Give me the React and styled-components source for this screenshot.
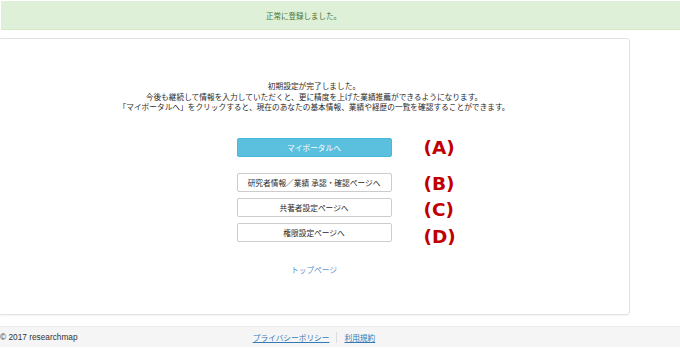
import React from "react";
import styled, { createGlobalStyle } from "styled-components";

const Global = createGlobalStyle`
  html, body {
    margin: 0;
    padding: 0;
    background: #fff;
  }
  body {
    font-family: "Liberation Sans", "Noto Sans CJK JP", sans-serif;
    color: #333;
  }
`;

const Page = styled.div`
  width: 680px;
  height: 348px;
  overflow: hidden;
  padding-top: 1px;
  box-sizing: border-box;
`;

const Alert = styled.div`
  height: 28px;
  margin-left: 1px;
  background: #dff0d8;
  border-bottom: 1px solid #d6e9c6;
  color: #3c763d;
  font-size: 7.5px;
  display: flex;
  align-items: center;
  justify-content: center;
  padding-right: 74px;
`;

const Container = styled.div`
  width: 632px;
  margin-left: -2px;
`;

const Card = styled.div`
  margin-top: 8px;
  height: 277px;
  box-sizing: border-box;
  border: 1px solid #e3e3e3;
  border-radius: 3px;
  box-shadow: 0 1px 1px rgba(0, 0, 0, 0.04);
  padding-top: 43px;
  display: flex;
  flex-direction: column;
  align-items: stretch;
`;

const Message = styled.p`
  margin: 0;
  text-align: center;
  font-size: 7.7px;
  line-height: 10.5px;
  color: #2a2a2a;
`;

const Actions = styled.div`
  margin-top: 24px;
  display: flex;
  flex-direction: column;
  gap: 6px;
`;

const Row = styled.div`
  display: grid;
  grid-template-columns: 1fr 155px 1fr;
  align-items: center;
  margin-bottom: ${(p) => (p.$spaced ? "10px" : "0")};
`;

const Button = styled.button`
  grid-column: 2;
  height: 19px;
  box-sizing: border-box;
  padding: 0;
  font-family: inherit;
  font-size: 7.7px;
  border-radius: 2px;
  border: 1px solid ${(p) => (p.$primary ? "#46b8da" : "#ccc")};
  background: ${(p) => (p.$primary ? "#5bc0de" : "#fff")};
  color: ${(p) => (p.$primary ? "#fff" : "#2a2a2a")};
  cursor: pointer;
`;

const Mark = styled.span`
  grid-column: 3;
  padding-left: 32px;
  font-family: "DejaVu Sans", sans-serif;
  font-weight: bold;
  font-size: 18.5px;
  line-height: 19px;
  color: #c00000;
  transform: translateY(${(p) => p.$shift || 0}px);
`;

const TopLink = styled.a`
  margin-top: 22px;
  align-self: center;
  font-size: 7.7px;
  color: #5b8fc7;
  text-decoration: none;
`;

const Footer = styled.footer`
  margin-top: 11px;
  height: 20px;
  background: #f5f5f5;
  border-top: 1px solid #ececec;
`;

const FooterInner = styled(Container)`
  height: 20px;
  display: grid;
  grid-template-columns: 1fr auto 1fr;
  align-items: center;
`;

const Copy = styled.span`
  padding-left: 2px;
  font-size: 8.3px;
  color: #333;
`;

const Links = styled.div`
  display: flex;
  align-items: center;
  gap: 7px;
  font-size: 7.7px;
`;

const FootLink = styled.a`
  color: #337ab7;
  text-decoration: underline;
`;

const Sep = styled.span`
  width: 1px;
  height: 11px;
  background: #ddd;
`;

const buttons = [
  { label: "マイポータルへ", mark: "(A)", primary: true, shift: 0 },
  { label: "研究者情報／業績 承認・確認ページへ", mark: "(B)", shift: 0.5 },
  { label: "共著者設定ページへ", mark: "(C)", shift: 1.5 },
  { label: "権限設定ページへ", mark: "(D)", shift: 4 },
];

export default function App() {
  return (
    <>
      <Global />
      <Page>
        <Alert>正常に登録しました。</Alert>
        <Container>
          <Card>
            <Message>
              初期設定が完了しました。
              <br />
              今後も継続して情報を入力していただくと、更に精度を上げた業績推薦ができるようになります。
              <br />
              「マイポータルへ」をクリックすると、現在のあなたの基本情報、業績や経歴の一覧を確認することができます。
            </Message>
            <Actions>
              {buttons.map((b) => (
                <Row key={b.mark} $spaced={b.primary}>
                  <Button $primary={b.primary}>{b.label}</Button>
                  <Mark $shift={b.shift}>{b.mark}</Mark>
                </Row>
              ))}
            </Actions>
            <TopLink href="#">トップページ</TopLink>
          </Card>
        </Container>
        <Footer>
          <FooterInner>
            <Copy>© 2017 researchmap</Copy>
            <Links>
              <FootLink href="#">プライバシーポリシー</FootLink>
              <Sep />
              <FootLink href="#">利用規約</FootLink>
            </Links>
            <span />
          </FooterInner>
        </Footer>
      </Page>
    </>
  );
}
